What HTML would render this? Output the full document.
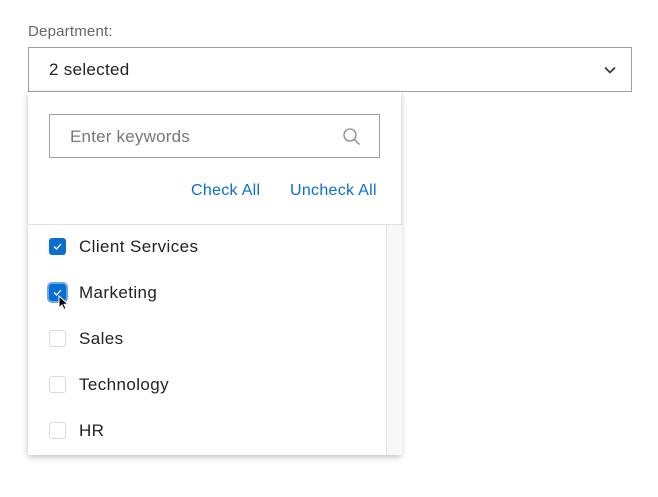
<!DOCTYPE html>
<html><head><style>
body{margin:0;width:658px;height:497px;background:#fff;font-family:"Liberation Sans",sans-serif;position:relative;overflow:hidden}
.a{position:absolute}
.lbl{left:28px;top:23px;font-size:15px;color:#666;letter-spacing:.2px}
.sel{left:28px;top:47px;width:602px;height:43px;border:1px solid #a0a0a0;}
.sel span{position:absolute;left:20px;top:12px;font-size:17px;color:#222;letter-spacing:.3px}
.dd{left:28px;top:92px;width:373px;height:363px;background:#fff;box-shadow:0 2px 6px rgba(0,0,0,.25)}
.inp{left:21px;top:22px;width:329px;height:42px;border:1px solid #a0a0a0}
.inp span{position:absolute;left:20px;top:12px;font-size:17px;color:#777;letter-spacing:.2px}
.lnk{font-size:16px;color:#0a6ed1;top:90px;letter-spacing:.3px}
.div{left:0;top:132px;width:373px;height:1px;background:#e3e3e3}
.sb{left:358px;top:133px;width:15px;height:230px;background:#f8f8f8;border-left:1px solid #e3e3e3}
.cb{left:21px;width:15px;height:15px;border:1px solid #d8d8d8;border-radius:3px;background:#fff}
.cb.on{background:#0a6ed1;border-color:#0a6ed1}
.it{left:51px;font-size:17px;color:#222;letter-spacing:.4px}
</style></head><body>
<div class="a lbl">Department:</div>
<div class="a sel"><span>2 selected</span>
<svg class="a" style="left:575px;top:18px" width="12" height="8" viewBox="0 0 12 8"><path d="M1 1.5l5 5 5-5" fill="none" stroke="#333" stroke-width="1.6"/></svg></div>
<div class="a dd">
<div class="a inp"><span>Enter keywords</span>
<svg class="a" style="left:292px;top:12px" width="19" height="19" viewBox="0 0 19 19"><circle cx="8" cy="8" r="6" fill="none" stroke="#888" stroke-width="1.3"/><path d="M12.5 12.5l5 5" stroke="#888" stroke-width="1.3"/></svg></div>
<div class="a lnk" style="left:163px">Check All</div>
<div class="a lnk" style="left:262px">Uncheck All</div>
<div class="a div"></div>
<div class="a sb"></div>
<div class="a cb on" style="top:146px"><svg width="15" height="15" viewBox="0 0 15 15"><path d="M4 7.5l2.5 2.5 4.5-5" fill="none" stroke="#fff" stroke-width="1.3"/></svg></div>
<div class="a it" style="top:145px">Client Services</div>
<div class="a cb on" style="top:192px;box-shadow:0 0 0 2px #6aa6ec"><svg width="15" height="15" viewBox="0 0 15 15"><path d="M4 7.5l2.5 2.5 4.5-5" fill="none" stroke="#fff" stroke-width="1.3"/></svg></div>
<svg class="a" style="left:30px;top:203px" width="12" height="16" viewBox="0 0 12 16"><path d="M1 1v12l3-3 2 4.5 2-1-2-4.3h4z" fill="#000" stroke="#fff" stroke-width="1"/></svg>
<div class="a it" style="top:191px">Marketing</div>
<div class="a cb" style="top:238px"></div><div class="a it" style="top:237px">Sales</div>
<div class="a cb" style="top:284px"></div><div class="a it" style="top:283px">Technology</div>
<div class="a cb" style="top:330px"></div><div class="a it" style="top:329px">HR</div>
</div>
</body></html>
